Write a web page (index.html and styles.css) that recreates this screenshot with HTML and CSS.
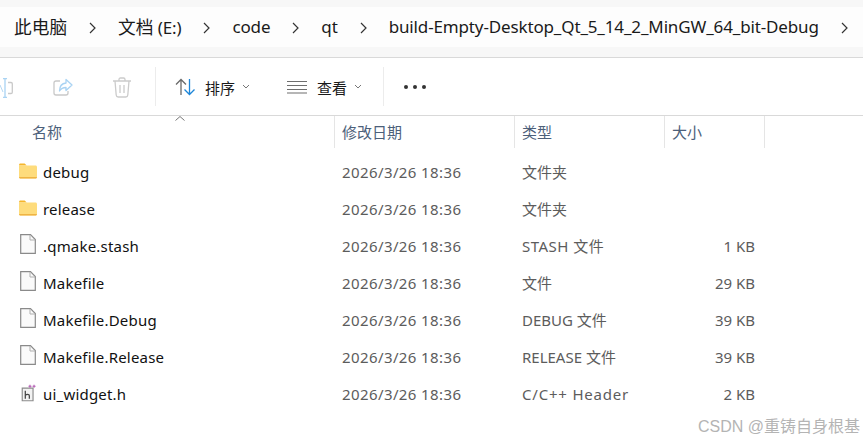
FILE: index.html
```html
<!DOCTYPE html>
<html lang="zh-CN">
<head>
  <meta charset="UTF-8">
  <title>build-Empty-Desktop_Qt_5_14_2_MinGW_64_bit-Debug</title>
  <link rel="stylesheet" href="styles.css">
</head>
<body>
  <svg class="sprites" width="0" height="0">
    <symbol id="folder" viewBox="0 0 18 15">
      <path d="M0 1.500C0 .6.600 0 1.500 0h4.200l2 2H0z" fill="#f5b62c"/>
      <path d="M0 2h16.500c.9 0 1.500.6 1.500 1.500v10c0 .9-.6 1.500-1.500 1.500h-15C.6 15 0 14.400 0 13.500z" fill="#fedc7c"/>
      <path d="M0 13.400h18V13.500c0 .9-.6 1.500-1.500 1.500h-15C.6 15 0 14.400 0 13.500z" fill="#efb444"/>
    </symbol>
    <symbol id="file" viewBox="0 0 16 20">
      <path d="M.7.7h9.800L15.300 5.500V19.300H.7z" fill="#fafafa" stroke="#8a8a8a" stroke-width="1.200"/>
      <path d="M10 1v5h5" fill="none" stroke="#b0b0b0"/>
    </symbol>
  </svg>

  <nav class="address">
    <span class="cjk">此电脑</span><svg class="chevron" viewBox="0 0 7 12"><path d="M1 1l5 5-5 5"/></svg>
    <span><span class="cjk">文档</span> (E:)</span><svg class="chevron" viewBox="0 0 7 12"><path d="M1 1l5 5-5 5"/></svg>
    <span>code</span><svg class="chevron" viewBox="0 0 7 12"><path d="M1 1l5 5-5 5"/></svg>
    <span>qt</span><svg class="chevron" viewBox="0 0 7 12"><path d="M1 1l5 5-5 5"/></svg>
    <span>build-Empty-Desktop_Qt_5_14_2_MinGW_64_bit-Debug</span><svg class="chevron" viewBox="0 0 7 12"><path d="M1 1l5 5-5 5"/></svg>
  </nav>

  <div class="toolbar">
    <svg class="tool-icon rename" width="14" height="20" viewBox="0 0 14 20">
      <path d="M8 4.500h3c.8 0 1.300.5 1.300 1.300v8.400c0 .8-.5 1.300-1.300 1.300H8" fill="none" stroke="#c9c9c9" stroke-width="1.300"/>
      <path d="M0 7l3 7" fill="none" stroke="#b5d8f3"/>
      <path d="M3 .6h4M3 19.400h4M5 .6v18.800" fill="none" stroke="#a9d3f3" stroke-width="1.300"/>
    </svg>
    <svg class="tool-icon share" width="20" height="20" viewBox="0 0 20 20">
      <path d="M7 3H3C1.800 3 1 3.800 1 5v10c0 1.200.8 2 2 2h10c1.200 0 2-.8 2-2v-2" fill="none" stroke="#c9c9c9" stroke-width="1.300"/>
      <path d="M13 1.500l6 5.500-6 5.500V9.500c-3 0-5 1-6.500 3.500 0-4.500 2.500-7.500 6.500-8z" fill="none" stroke="#a9d3f3" stroke-width="1.300" stroke-linejoin="round"/>
    </svg>
    <svg class="tool-icon trash" width="20" height="21" viewBox="0 0 20 21">
      <path d="M1 4h18M7 4V2.500C7 1.600 7.600 1 8.500 1h3c.9 0 1.500.6 1.500 1.500V4M3 4l1.200 14c.1 1.200.8 2 2 2h7.600c1.200 0 1.900-.8 2-2L17 4M8 8v8M12 8v8" fill="none" stroke="#cbcbcb" stroke-width="1.300"/>
    </svg>
    <div class="divider"></div>
    <div class="tool-button sort">
      <svg width="21" height="18" viewBox="0 0 21 18">
        <path d="M6 17V1.500M1 6.500l5-5 5 5" fill="none" stroke="#6a6a6a" stroke-width="1.300"/>
        <path d="M14.500 1v15.500M9.500 11.500l5 5 5-5" fill="none" stroke="#1e86d8" stroke-width="1.300"/>
      </svg>
      <span>排序</span>
      <svg class="caret" viewBox="0 0 8 5"><path d="M1 1l3 3 3-3"/></svg>
    </div>
    <div class="tool-button view">
      <svg width="20" height="14" viewBox="0 0 20 14">
        <path d="M0 1.500h20M0 5.500h20M0 9.500h20M0 13h20" fill="none" stroke="#6e6e6e" stroke-width="1.100"/>
      </svg>
      <span>查看</span>
      <svg class="caret" viewBox="0 0 8 5"><path d="M1 1l3 3 3-3"/></svg>
    </div>
    <div class="divider second"></div>
    <div class="more"><i></i><i></i><i></i></div>
  </div>

  <div class="list">
    <div class="columns">
      <div class="col-name">名称
        <svg class="sort-up" viewBox="0 0 10 5"><path d="M.5 4.500L5 .5l4.500 4"/></svg>
      </div>
      <div>修改日期</div>
      <div>类型</div>
      <div>大小</div>
    </div>

    <div class="row">
      <div class="name"><svg class="icon"><use href="#folder"/></svg>debug</div>
      <div class="date">2026/3/26 18:36</div><div class="type">文件夹</div><div class="size"></div>
    </div>
    <div class="row">
      <div class="name"><svg class="icon"><use href="#folder"/></svg>release</div>
      <div class="date">2026/3/26 18:36</div><div class="type">文件夹</div><div class="size"></div>
    </div>
    <div class="row">
      <div class="name"><svg class="icon file"><use href="#file"/></svg>.qmake.stash</div>
      <div class="date">2026/3/26 18:36</div><div class="type wide">STASH 文件</div><div class="size">1 KB</div>
    </div>
    <div class="row">
      <div class="name"><svg class="icon file"><use href="#file"/></svg>Makefile</div>
      <div class="date">2026/3/26 18:36</div><div class="type">文件</div><div class="size">29 KB</div>
    </div>
    <div class="row">
      <div class="name"><svg class="icon file"><use href="#file"/></svg>Makefile.Debug</div>
      <div class="date">2026/3/26 18:36</div><div class="type">DEBUG 文件</div><div class="size">39 KB</div>
    </div>
    <div class="row">
      <div class="name"><svg class="icon file"><use href="#file"/></svg>Makefile.Release</div>
      <div class="date">2026/3/26 18:36</div><div class="type">RELEASE 文件</div><div class="size">39 KB</div>
    </div>
    <div class="row">
      <div class="name">
        <svg class="icon" viewBox="0 0 18 20">
          <path d="M2.600 4.600h12V18.600h-12z" fill="#f2f2f2" stroke="#8c8c8c" stroke-width="1.300"/>
          <path d="M6 7.500v9M6 12.500c1-1 4.500-1.500 4.500.5v3.500" fill="none" stroke="#444" stroke-width="1.400"/>
          <path d="M9.500 2.500h3.400M11.200.8v3.400M14 2.500h3.400M15.700.8v3.400" fill="none" stroke="#b35bb3" stroke-width="1.200"/>
        </svg>ui_widget.h
      </div>
      <div class="date">2026/3/26 18:36</div><div class="type wider">C/C++ Header</div><div class="size">2 KB</div>
    </div>
  </div>

  <div class="watermark">CSDN @重铸自身根基</div>
</body>
</html>
```

FILE: styles.css
```css
body {
  margin: 0;
  height: 441px;
  overflow: hidden;
  position: relative;
  background-color: #fff;
  font-family: "Noto Sans", "Noto Sans CJK SC", sans-serif;
  color: #1a1a1a;
}

.sprites {
  position: absolute;
}

.address {
  height: 38px;
  margin-top: 7px;
  padding-left: 14px;
  padding-bottom: 2px;
  display: flex;
  align-items: center;
  gap: 22px;
  background-color: #fdfdfd;
  box-shadow: 0 -7px 0 #f7f7f7;
  border-bottom: 10px solid #f7f7f7;
  font-size: 17px;
  letter-spacing: -0.14px;
  white-space: nowrap;
}

.address .cjk {
  font-size: 17.700px;
  letter-spacing: 0;
}

.chevron {
  width: 7px;
  height: 12px;
  flex: none;
  margin-top: 3px;
}

.chevron path {
  fill: none;
  stroke: #333;
  stroke-width: 1.200;
}

.toolbar {
  height: 57px;
  border-top: 1px solid #d9d9d9;
  border-bottom: 1px solid #d9d9d9;
  display: flex;
  align-items: center;
  position: relative;
  padding-left: 53px;
}

.tool-icon {
  flex: none;
}

.rename {
  position: absolute;
  left: 0;
  top: 20px;
}

.share {
  margin-right: 39px;
  margin-top: 2px;
}

.trash {
  margin-top: 2px;
}

.divider {
  width: 1px;
  height: 39px;
  background-color: #ececec;
  margin-left: 23px;
  margin-right: 19px;
}

.divider.second {
  margin-left: 21px;
  margin-right: 20px;
}

.tool-button {
  display: flex;
  align-items: center;
  font-size: 15px;
}

.tool-button span {
  margin-left: 9px;
  margin-top: 1px;
}

.tool-button.view {
  margin-left: 37px;
}

.tool-button.view span {
  margin-left: 10px;
}

.caret {
  width: 8px;
  height: 5px;
  margin-left: 7px;
  margin-top: -1px;
}

.caret path {
  fill: none;
  stroke: #777;
}

.more {
  display: flex;
  gap: 5px;
}

.more i {
  width: 4px;
  height: 4px;
  border-radius: 50%;
  background-color: #333;
}

.columns,
.row {
  display: grid;
  grid-template-columns: 335px 180px 150px 100px;
}

.columns {
  height: 32px;
  font-size: 15px;
  color: #4c607a;
  margin-bottom: 5px;
}

.columns > div {
  display: flex;
  align-items: center;
  border-right: 1px solid #e5e5e5;
  padding-left: 7px;
  padding-bottom: 2px;
  box-sizing: border-box;
  position: relative;
}

.columns .col-name {
  padding-left: 32px;
}

.sort-up {
  position: absolute;
  left: 175px;
  top: 0;
  width: 10px;
  height: 5px;
  fill: none;
  stroke: #777;
}

.row {
  height: 37px;
  align-items: center;
  font-size: 15px;
  color: #5c5c5c;
}

.name {
  display: flex;
  align-items: center;
  color: #111;
  padding-left: 19px;
  letter-spacing: 0.2px;
}

.icon {
  width: 18px;
  height: 18px;
  margin-right: 6px;
  margin-top: -2px;
  flex: none;
}

.icon.file {
  width: 16px;
  height: 20px;
  margin-left: 1px;
  margin-right: 7px;
  margin-top: -3px;
}

.date,
.type {
  padding-left: 7px;
}

.date {
  letter-spacing: 0.4px;
}

.type.wide {
  letter-spacing: 0.5px;
}

.type.wider {
  letter-spacing: 0.8px;
}

.size {
  text-align: right;
  padding-right: 10px;
}

.watermark {
  position: absolute;
  right: 3px;
  bottom: 4px;
  font-family: "Liberation Sans", "Noto Sans CJK SC", sans-serif;
  font-size: 16px;
  color: #b4b4b4;
}
```
